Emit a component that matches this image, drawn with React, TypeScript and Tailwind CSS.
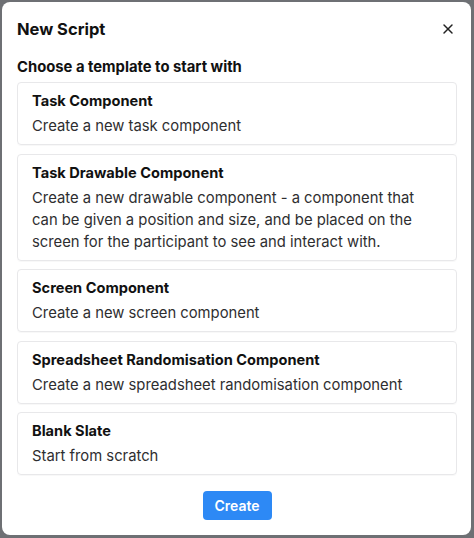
import { X } from "lucide-react";

const templates = [
  { title: "Task Component", desc: "Create a new task component" },
  {
    title: "Task Drawable Component",
    desc: "Create a new drawable component - a component that can be given a position and size, and be placed on the screen for the participant to see and interact with.",
  },
  { title: "Screen Component", desc: "Create a new screen component" },
  { title: "Spreadsheet Randomisation Component", desc: "Create a new spreadsheet randomisation component" },
  { title: "Blank Slate", desc: "Start from scratch" },
];

export default function App() {
  return (
    <div className="h-[538px] w-[474px] bg-[#6e7074] p-[2px] pr-[3px] font-['Inter','Noto_Sans',sans-serif]">
      <div className="flex h-[533px] flex-col rounded-lg bg-white pl-[15px] pr-[14px] pt-[15px]">
        <div className="flex h-6 items-center justify-between">
          <h2 className="text-[16.5px] font-bold leading-6 text-[#111]">New Script</h2>
          <button className="mr-[1px] text-[#222]">
            <X size={16} strokeWidth={2.2} />
          </button>
        </div>
        <p className="mt-4 text-[14.8px] font-bold leading-5 text-[#111]">Choose a template to start with</p>
        <div className="mt-[5px] flex flex-col gap-[8.6px]">
          {templates.map((t) => (
            <div
              key={t.title}
              className="rounded border border-[#e8e8ea] pb-[7px] pl-[14px] pr-6 pt-2 shadow-[0_1px_1px_rgba(0,0,0,0.03)]"
            >
              <div className="text-[14.6px] font-bold leading-5 text-[#111]">{t.title}</div>
              <div className="mt-1 text-[14.8px] leading-[22px] text-[#2e2e30]">{t.desc}</div>
            </div>
          ))}
        </div>
        <div className="mt-4 flex justify-center">
          <button className="h-[29px] w-[69px] rounded bg-[#2d89f5] text-[14px] font-semibold text-white">
            Create
          </button>
        </div>
      </div>
    </div>
  );
}
